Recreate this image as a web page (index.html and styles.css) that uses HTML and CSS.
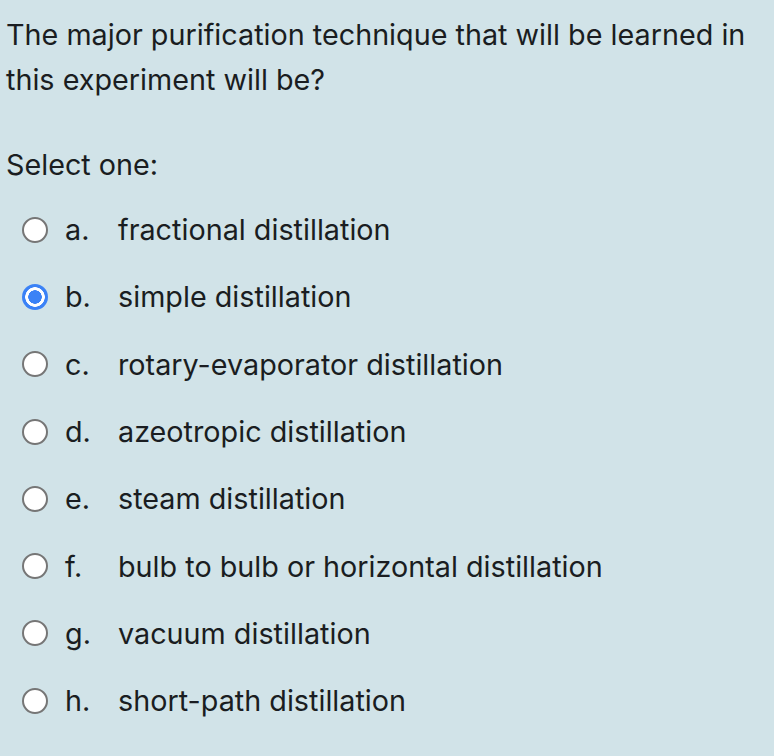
FILE: index.html
```html
<!DOCTYPE html>
<html>
<head>
<meta charset="utf-8">
<link rel="stylesheet" href="styles.css">
</head>
<body>
<div class="formulation">
  <div class="qtext">The major purification technique that will be learned in this experiment will be?</div>
  <div class="prompt">Select one:</div>
  <div class="answers">
    <label class="opt"><span class="radio"></span><span class="letter">a.</span><span class="txt">fractional distillation</span></label>
    <label class="opt"><span class="radio checked"></span><span class="letter">b.</span><span class="txt">simple distillation</span></label>
    <label class="opt"><span class="radio"></span><span class="letter">c.</span><span class="txt">rotary-evaporator distillation</span></label>
    <label class="opt"><span class="radio"></span><span class="letter">d.</span><span class="txt">azeotropic distillation</span></label>
    <label class="opt"><span class="radio"></span><span class="letter">e.</span><span class="txt">steam distillation</span></label>
    <label class="opt"><span class="radio"></span><span class="letter">f.</span><span class="txt">bulb to bulb or horizontal distillation</span></label>
    <label class="opt"><span class="radio"></span><span class="letter">g.</span><span class="txt">vacuum distillation</span></label>
    <label class="opt"><span class="radio"></span><span class="letter">h.</span><span class="txt">short-path distillation</span></label>
  </div>
</div>
</body>
</html>
```
FILE: styles.css
```css
html, body {
  margin: 0;
  padding: 0;
  background: #d1e3e8;
}
body {
  width: 774px;
  height: 756px;
  overflow: hidden;
  font-family: Inter, "Noto Sans", sans-serif;
  font-size: 28.75px;
  color: #1a1d21;
}
.formulation {
  padding: 12px 6px 0 6px;
}
.qtext {
  line-height: 45px;
  width: 760px;
}
.prompt {
  margin-top: 40px;
  line-height: 45px;
}
.answers {
  margin-top: 9px;
  display: flex;
  flex-direction: column;
}
.opt {
  display: flex;
  align-items: center;
  height: 67.3px;
}
.radio {
  box-sizing: border-box;
  width: 26px;
  height: 26px;
  border-radius: 50%;
  border: 2px solid #767676;
  background: #fff;
  margin-left: 16px;
  margin-right: 17px;
  flex: none;
}
.radio.checked {
  border: none;
  background: radial-gradient(circle, #3b82f6 0 6.5px, #fff 7px 9.5px, #3b82f6 10px);
}
.letter {
  width: 53px;
  flex: none;
}
```
